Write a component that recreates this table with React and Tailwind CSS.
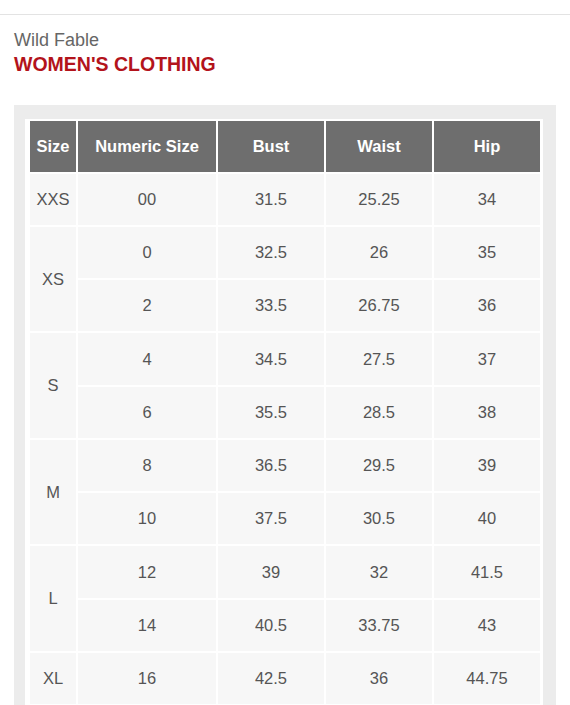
import React from 'react';

const rows = [
  { size: 'XXS', span: 1, items: [['00', '31.5', '25.25', '34']] },
  { size: 'XS', span: 2, items: [['0', '32.5', '26', '35'], ['2', '33.5', '26.75', '36']] },
  { size: 'S', span: 2, items: [['4', '34.5', '27.5', '37'], ['6', '35.5', '28.5', '38']] },
  { size: 'M', span: 2, items: [['8', '36.5', '29.5', '39'], ['10', '37.5', '30.5', '40']] },
  { size: 'L', span: 2, items: [['12', '39', '32', '41.5'], ['14', '40.5', '33.75', '43']] },
  { size: 'XL', span: 1, items: [['16', '42.5', '36', '44.75']] },
];

const cell = 'h-[51.25px] bg-[#f7f7f7] text-center align-middle p-0';

const App = () => {
  return (
    <div className="min-h-screen bg-white pt-[14px] font-['Liberation_Sans',Arial,sans-serif]">
      <div className="h-px bg-[#e3e3e3]" />
      <div className="px-[14px] pt-[15px]">
        <p className="text-[18px] leading-[20px] text-[#666666]">Wild Fable</p>
        <p className="mt-[2.5px] text-[19.5px] leading-[22px] font-bold text-[#b3131b]">WOMEN'S CLOTHING</p>

        <div className="mt-[30px] bg-[#ececec] pl-[11px] pr-[13px] pt-[14px]">
          <div className="bg-white pl-[3px] pr-[1px]">
            <table className="w-[514px] table-fixed border-separate border-spacing-[2px] text-[16.5px] text-[#555555]">
              <thead>
                <tr>
                  <th className="w-[46px] h-[51px] bg-[#6e6e6e] p-0 font-bold text-white">Size</th>
                  <th className="w-[138px] h-[51px] bg-[#6e6e6e] p-0 font-bold text-white">Numeric Size</th>
                  <th className="w-[106px] h-[51px] bg-[#6e6e6e] p-0 font-bold text-white">Bust</th>
                  <th className="w-[106px] h-[51px] bg-[#6e6e6e] p-0 font-bold text-white">Waist</th>
                  <th className="w-[106px] h-[51px] bg-[#6e6e6e] p-0 font-bold text-white">Hip</th>
                </tr>
              </thead>
              <tbody>
                {rows.map((group) =>
                  group.items.map((item, i) => (
                    <tr key={group.size + i}>
                      {i === 0 && (
                        <td rowSpan={group.span} className={cell}>{group.size}</td>
                      )}
                      {item.map((v, j) => (
                        <td key={j} className={cell}>{v}</td>
                      ))}
                    </tr>
                  ))
                )}
              </tbody>
            </table>
          </div>
        </div>
      </div>
    </div>
  );
};

export default App;
